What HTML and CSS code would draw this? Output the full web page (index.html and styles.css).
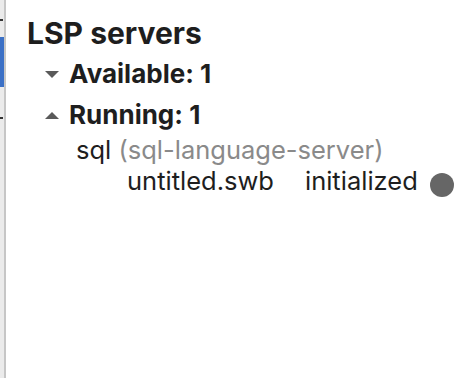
FILE: index.html
```html
<!DOCTYPE html>
<html lang="en">
<head>
  <meta charset="UTF-8">
  <title>LSP servers</title>
  <link rel="stylesheet" href="styles.css">
</head>
<body>
  <div class="page">
    <div class="edge">
      <span class="tick"></span>
      <span class="tab"></span>
      <span class="tick"></span>
    </div>
    <div class="panel">
      <h1>LSP servers</h1>
      <div class="group">
        <span class="caret down"></span>
        <span class="label">Available: 1</span>
      </div>
      <div class="group">
        <span class="caret up"></span>
        <span class="label">Running: 1</span>
      </div>
      <div class="server">sql <span class="pkg">(sql-language-server)</span></div>
      <div class="doc">
        <span class="file">untitled.swb</span>
        <span class="state">initialized</span>
        <span class="dot"></span>
      </div>
    </div>
  </div>
</body>
</html>
```

FILE: styles.css
```css
body {
  margin: 0;
  font-family: Inter, "Liberation Sans", sans-serif;
  color: #1e1e1e;
  background: #fff;
}
.page {
  display: flex;
  min-height: 378px;
}
.edge {
  width: 4px;
  background: #ebebeb;
  border-right: 2px solid #c6c6c6;
  display: flex;
  flex-direction: column;
  padding-top: 19px;
}
.tick {
  width: 3px;
  height: 2px;
  background: #333;
}
.tab {
  width: 4px;
  height: 50px;
  background: #3b70c6;
  margin: 16px 0 30px;
}
.panel {
  padding: 13px 0 0 21px;
}
h1 {
  margin: 0;
  font-size: 30px;
  font-weight: 700;
  line-height: 40px;
}
.group {
  display: flex;
  align-items: center;
  margin: 1px 0 0 18px;
  line-height: 40px;
}
.caret {
  width: 0;
  height: 0;
  border-left: 7px solid transparent;
  border-right: 7px solid transparent;
  margin-right: 10px;
}
.caret.down { border-top: 7px solid #5a5a5a; }
.caret.up { border-bottom: 7px solid #5a5a5a; }
.label {
  font-size: 26px;
  font-weight: 700;
}
.server {
  margin-left: 49px;
  font-size: 25.5px;
  line-height: 29px;
}
.pkg { color: #8a8a8a; }
.doc {
  display: flex;
  align-items: center;
  margin-left: 100px;
  font-size: 25.5px;
  line-height: 33px;
}
.state { margin-left: 31px; }
.dot {
  align-self: flex-end;
  width: 24px;
  height: 24px;
  border-radius: 50%;
  background: #666;
  margin-left: 12px;
}
```
